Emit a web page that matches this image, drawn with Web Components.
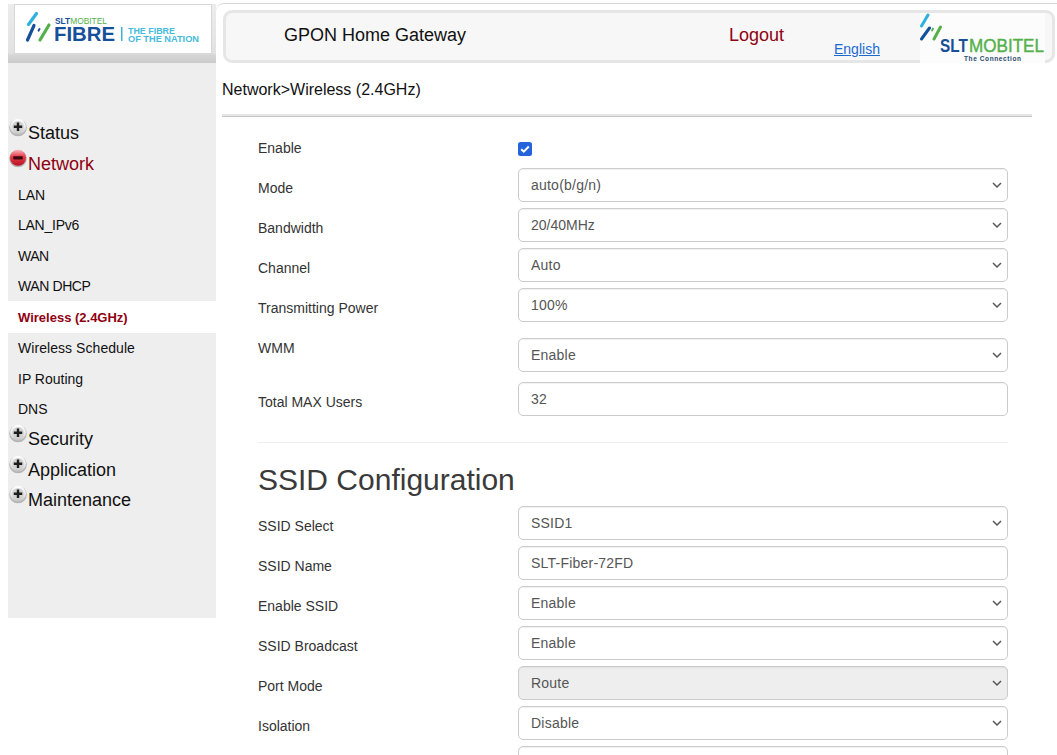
<!DOCTYPE html>
<html lang="en"><head><meta charset="utf-8"><title>GPON Home Gateway</title>
<style>
html,body{margin:0;padding:0;height:755px;overflow:hidden;background:#fff;font-family:"Liberation Sans",Arial,sans-serif;color:#111}
</style></head><body>
<gw-app>
  <gw-sidebar slot="side">
    <gw-group label="Status"></gw-group>
    <gw-group label="Network" open>
      <gw-item>LAN</gw-item><gw-item style="letter-spacing:-.25px">LAN_IPv6</gw-item><gw-item style="letter-spacing:-.5px">WAN</gw-item><gw-item style="letter-spacing:-.4px">WAN DHCP</gw-item>
      <gw-item active>Wireless (2.4GHz)</gw-item><gw-item style="letter-spacing:.06px">Wireless Schedule</gw-item><gw-item>IP Routing</gw-item><gw-item>DNS</gw-item>
    </gw-group>
    <gw-group label="Security"></gw-group>
    <gw-group label="Application"></gw-group>
    <gw-group label="Maintenance"></gw-group>
  </gw-sidebar>
  <gw-header slot="head"></gw-header>
  <gw-crumb slot="main">Network&gt;Wireless (2.4GHz)</gw-crumb>
  <gw-form slot="main">
    <gw-row label="Enable" kind="check"></gw-row>
    <gw-row label="Mode" value="auto(b/g/n)"></gw-row>
    <gw-row label="Bandwidth" value="20/40MHz" style="--ls:0"></gw-row>
    <gw-row label="Channel" value="Auto"></gw-row>
    <gw-row label="Transmitting Power" value="100%"></gw-row>
    <gw-row label="WMM" value="Enable" style="margin-top:16px" lift="7"></gw-row>
    <gw-row label="Total MAX Users" value="32" kind="input" style="margin-top:10px"></gw-row>
    <gw-heading>SSID Configuration</gw-heading>
    <gw-row label="SSID Select" value="SSID1"></gw-row>
    <gw-row label="SSID Name" value="SLT-Fiber-72FD" kind="input"></gw-row>
    <gw-row label="Enable SSID" value="Enable"></gw-row>
    <gw-row label="SSID Broadcast" value="Enable"></gw-row>
    <gw-row label="Port Mode" value="Route" disabled></gw-row>
    <gw-row label="Isolation" value="Disable"></gw-row>
    <gw-row label="" value=""></gw-row>
  </gw-form>
</gw-app>
<script>
function def(name, html, init){
  customElements.define(name, class extends HTMLElement{
    constructor(){super();this.attachShadow({mode:'open'}).innerHTML=html;}
    connectedCallback(){ if(init) init(this,this.shadowRoot); }
  });
}
def('gw-app',`<style>
:host{display:block;position:relative;height:755px;overflow:hidden}
.wrap{display:grid;grid-template-columns:208px 1fr;margin-left:8px;height:755px}
.r{display:flex;flex-direction:column;min-width:0}
.content{padding:0 25px 0 6px}
</style>
<div class="wrap"><div><slot name="side"></slot></div>
<div class="r"><slot name="head"></slot><div class="content"><slot name="main"></slot></div></div></div>`);

def('gw-sidebar',`<style>
:host{display:block;width:208px;height:618px;background:#eee;position:relative}
.top{height:63px;box-sizing:border-box;padding:1px 5px 0 7px;border-top:4px solid #fff;background:linear-gradient(#ececec 0,#e2e2e2 49px,#d6d6d6 51px,#cbcbcb 100%);background-clip:padding-box}
.logo{height:48px;background:#fff;box-shadow:0 0 0 1px #d8d8d8;display:block;box-sizing:border-box}
svg{display:block}
.list{padding-top:56px}
</style>
<div class="top"><div class="logo">
<svg width="196" height="48" viewBox="0 0 196 48">
<g stroke-linecap="round" fill="none">
<path d="M21.500 8.500 13.500 19.500" stroke="#2fb0de" stroke-width="3.200"/>
<path d="M19 20.500 12.500 35" stroke="#17509a" stroke-width="3.200"/>
<path d="M24.500 24 23.600 25.600" stroke="#17509a" stroke-width="2"/>
<path d="M34 20 25 35" stroke="#55b04a" stroke-width="3.200"/>
</g>
<text x="40" y="18.500" font-family="Liberation Sans" font-size="9" font-weight="700" fill="#17509a" textLength="52" lengthAdjust="spacingAndGlyphs">SLT<tspan font-weight="400" fill="#55b04a">MOBITEL</tspan></text>
<text x="39" y="36" font-family="Liberation Sans" font-size="21" font-weight="700" fill="#17509a" textLength="61" lengthAdjust="spacingAndGlyphs">FIBRE</text>
<rect x="106" y="22" width="1.500" height="14" fill="#3bb6d8"/>
<text x="113" y="28.500" font-family="Liberation Sans" font-size="9" font-weight="700" fill="#45bbdc" textLength="47" lengthAdjust="spacingAndGlyphs">THE FIBRE</text>
<text x="113" y="36.500" font-family="Liberation Sans" font-size="9" font-weight="700" fill="#45bbdc" textLength="71" lengthAdjust="spacingAndGlyphs">OF THE NATION</text>
</svg></div></div>
<div class="list"><slot></slot></div>`);

const icon=(open)=>{
 const id=open?'r':'g';
 const stops=open?'<stop offset="0" stop-color="#f7b8bd"/><stop offset=".4" stop-color="#e8404f"/><stop offset="1" stop-color="#b8101f"/>':'<stop offset="0" stop-color="#ffffff"/><stop offset=".6" stop-color="#e6e6e6"/><stop offset="1" stop-color="#bdbdbd"/>';
 const mark=open?'<rect x="4.200" y="7.200" width="9.600" height="3.200" rx=".8" fill="#3a0a0e"/>':'<circle cx="9" cy="8.700" r="5.800" fill="#d2d2d2"/><path d="M7.800 4.500h2.400v3h3v2.400h-3v3H7.800v-3h-3V7.500h3z" fill="#1d1d1d"/>';
 return `<svg width="18" height="19" viewBox="0 0 18 19"><defs><linearGradient id="${id}" x1="0" y1="0" x2="0" y2="1">${stops}</linearGradient></defs><ellipse cx="9" cy="9.600" rx="8.800" ry="8.600" fill="#8c8c8c" opacity=".6"/><circle cx="9" cy="8.800" r="8" fill="url(#${id})"/>${mark}</svg>`;
};
def('gw-group',`<style>
:host{display:block}
.h{display:flex;align-items:flex-start;height:30.6px;font-size:18px;line-height:21px;padding-left:1px;box-sizing:border-box}
.ic{width:19px;height:19px;margin-top:-1px}
.t{margin-top:4px;color:#111}
:host([open]) .t{color:#8f0012}
svg{display:block}
.kids{display:none}
:host([open]) .kids{display:block;margin-top:-.3px;margin-bottom:.5px}
</style><div class="h"><span class="ic"></span><span class="t"></span></div><div class="kids"><slot></slot></div>`,
(el,s)=>{const o=el.hasAttribute('open');s.querySelector('.t').textContent=el.getAttribute('label');s.querySelector('.ic').innerHTML=icon(o);});

def('gw-item',`<style>
:host{display:block;height:30.4px;line-height:30.4px;font-size:14px;padding-left:10px;color:#111}
:host([active]){background:#fff;color:#8f0012;font-weight:700;font-size:13px;height:32px;box-sizing:border-box;padding-top:1px;line-height:32px}
</style><slot></slot>`);

def('gw-header',`<style>
:host{display:block;height:60px;position:relative;border-top:1px solid #d8d8d8;border-top-left-radius:8px;box-sizing:border-box;margin-top:3px;padding:6px 2px 0 7px;background:#fff}
.box{height:53px;box-sizing:border-box;border:3px solid #e6e6e6;border-radius:9px;background:#f7f7f7;position:relative;display:flex;align-items:flex-start}
.title{font-size:18px;line-height:21px;margin:12px 0 0 58px;width:445px;color:#111}
.out{font-size:18px;line-height:21px;margin:12px 0 0 0;color:#8f0012;width:105px}
.lang{font-size:14px;line-height:16px;margin-top:28px;color:#1a6ad2;text-decoration:underline}
.logo{position:absolute;right:7px;top:0;width:125px;height:50px;background:#fbfcfb}
svg{display:block}
</style><div class="box"><span class="title">GPON Home Gateway</span><span class="out">Logout</span><span class="lang">English</span>
<div class="logo"><svg width="125" height="50" viewBox="0 0 125 50">
<g stroke-linecap="round" fill="none">
<path d="M8 2 1.500 13" stroke="#2fb0de" stroke-width="3"/><path d="M9.500 15 1.500 26" stroke="#17509a" stroke-width="3"/><path d="M13 15.500 12 17.500" stroke="#55b04a" stroke-width="1.800"/><path d="M20.500 14 14 26" stroke="#55b04a" stroke-width="3"/></g>
<text transform="translate(20 39) scale(.85 1)" font-family="Liberation Sans" font-size="18" font-weight="700" fill="#17509a">SLT</text>
<text transform="translate(49 39) scale(.95 1)" font-family="Liberation Sans" font-size="18" stroke="#55b04a" stroke-width=".4" fill="#55b04a">MOBITEL</text>
<text x="44" y="47.500" font-family="Liberation Sans" font-size="6.500" font-weight="700" fill="#2a4a70" textLength="57">The Connection</text>
</svg></div></div>`);

def('gw-crumb',`<style>
:host{display:block;height:52px;box-sizing:border-box;padding-top:17px;font-size:16px;line-height:20px;color:#111;position:relative}
.l{position:absolute;left:0;right:0;bottom:-2px;height:3px;background:linear-gradient(#e6e6e6 0,#e6e6e6 2px,#c6c6c6 2px,#c6c6c6 3px)}
</style><slot></slot><div class="l"></div>`);

def('gw-form',`<style>
:host{display:block;padding:13px 24px 0 36px}
</style><slot></slot>`);

def('gw-heading',`<style>
:host{display:block;border-top:1px solid #eee;margin-top:26px;padding-top:20px;height:64px;box-sizing:border-box;font-size:30px;line-height:33px;font-weight:400;color:#3a3a3a}
</style><slot></slot>`);

def('gw-row',`<style>
:host{display:block;margin-bottom:6px}
.r{display:grid;grid-template-columns:260px 1fr;height:34px;align-items:center;font-size:14px;color:#333}
.l{padding-top:6px}
.c{height:34px;box-sizing:border-box;border:1px solid #ccc;border-radius:5px;background:#fff;color:#555;padding:0 12px;line-height:32px;position:relative;box-shadow:inset 0 1px 1px rgba(0,0,0,.06);letter-spacing:var(--ls,.22px)}
.c.d{background:#eee}
svg{position:absolute;right:5px;top:12px}
.chk{display:block;width:14px;height:14px;background:#2563dc;border-radius:2.5px;margin-top:8px}
.chk svg{position:static;display:block}
</style><div class="r"><span class="l"></span><div class="x"></div></div>`,
(el,s)=>{
  s.querySelector('.l').textContent=el.getAttribute('label');
  const k=el.getAttribute('kind'),x=s.querySelector('.x');
  const lift=el.getAttribute('lift'); if(lift) s.querySelector('.l').style.paddingTop='0',s.querySelector('.l').style.marginTop='-'+(+lift+7)+'px';
  if(k==='check'){x.innerHTML='<span class="chk"><svg width="14" height="14" viewBox="0 0 14 14"><path d="M3.200 7.200 5.800 9.700 10.800 4.500" fill="none" stroke="#fff" stroke-width="2"/></svg></span>';return;}
  const v=el.getAttribute('value')||'';
  const ch=k==='input'?'':'<svg width="10" height="8" viewBox="0 0 10 8"><path d="M1 2l4 4 4-4" fill="none" stroke="#555" stroke-width="1.500"/></svg>';
  x.innerHTML='<div class="c'+(el.hasAttribute('disabled')?' d':'')+'"><span></span>'+ch+'</div>';
  x.querySelector('span').textContent=v;
});
</script>
</body></html>
